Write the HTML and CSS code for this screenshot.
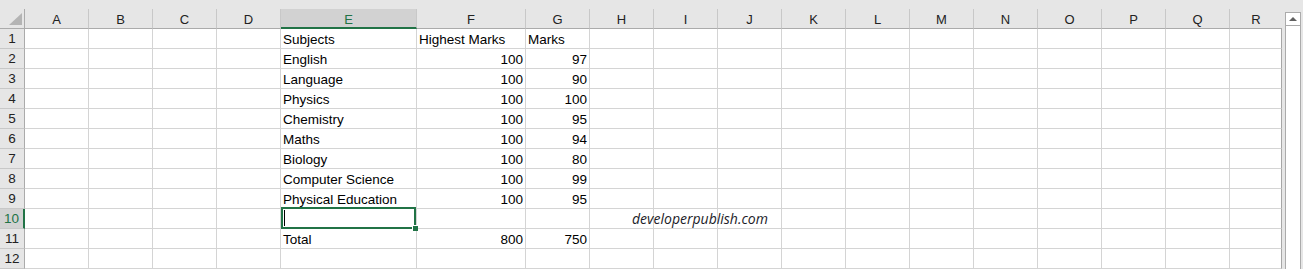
FILE: index.html
```html
<!DOCTYPE html>
<html lang="en">
<head>
    <meta charset="UTF-8">
    <title>Marks - Sheet1</title>
    <link rel="stylesheet" href="styles.css">
</head>
<body>
    <div class="app">
        <div class="sheet">
            <!-- column headers -->
            <div class="hd corner"><svg width="14" height="13" viewBox="0 0 14 13"><polygon points="13,0 13,12 0,12" fill="#b4b4b4"/></svg></div>
            <div class="hd">A</div><div class="hd">B</div><div class="hd">C</div><div class="hd">D</div>
            <div class="hd sel">E</div><div class="hd">F</div><div class="hd">G</div><div class="hd">H</div>
            <div class="hd">I</div><div class="hd">J</div><div class="hd">K</div><div class="hd">L</div>
            <div class="hd">M</div><div class="hd">N</div><div class="hd">O</div><div class="hd">P</div>
            <div class="hd">Q</div><div class="hd">R</div>

            <!-- row 1 -->
            <div class="rh">1</div>
            <div class="c"></div><div class="c"></div><div class="c"></div><div class="c"></div>
            <div class="c">Subjects</div><div class="c">Highest Marks</div><div class="c">Marks</div>
            <div class="c"></div><div class="c"></div><div class="c"></div><div class="c"></div><div class="c"></div><div class="c"></div><div class="c"></div><div class="c"></div><div class="c"></div><div class="c"></div><div class="c"></div>

            <!-- row 2 -->
            <div class="rh">2</div>
            <div class="c"></div><div class="c"></div><div class="c"></div><div class="c"></div>
            <div class="c">English</div><div class="c num">100</div><div class="c num">97</div>
            <div class="c"></div><div class="c"></div><div class="c"></div><div class="c"></div><div class="c"></div><div class="c"></div><div class="c"></div><div class="c"></div><div class="c"></div><div class="c"></div><div class="c"></div>

            <!-- row 3 -->
            <div class="rh">3</div>
            <div class="c"></div><div class="c"></div><div class="c"></div><div class="c"></div>
            <div class="c">Language</div><div class="c num">100</div><div class="c num">90</div>
            <div class="c"></div><div class="c"></div><div class="c"></div><div class="c"></div><div class="c"></div><div class="c"></div><div class="c"></div><div class="c"></div><div class="c"></div><div class="c"></div><div class="c"></div>

            <!-- row 4 -->
            <div class="rh">4</div>
            <div class="c"></div><div class="c"></div><div class="c"></div><div class="c"></div>
            <div class="c">Physics</div><div class="c num">100</div><div class="c num">100</div>
            <div class="c"></div><div class="c"></div><div class="c"></div><div class="c"></div><div class="c"></div><div class="c"></div><div class="c"></div><div class="c"></div><div class="c"></div><div class="c"></div><div class="c"></div>

            <!-- row 5 -->
            <div class="rh">5</div>
            <div class="c"></div><div class="c"></div><div class="c"></div><div class="c"></div>
            <div class="c">Chemistry</div><div class="c num">100</div><div class="c num">95</div>
            <div class="c"></div><div class="c"></div><div class="c"></div><div class="c"></div><div class="c"></div><div class="c"></div><div class="c"></div><div class="c"></div><div class="c"></div><div class="c"></div><div class="c"></div>

            <!-- row 6 -->
            <div class="rh">6</div>
            <div class="c"></div><div class="c"></div><div class="c"></div><div class="c"></div>
            <div class="c">Maths</div><div class="c num">100</div><div class="c num">94</div>
            <div class="c"></div><div class="c"></div><div class="c"></div><div class="c"></div><div class="c"></div><div class="c"></div><div class="c"></div><div class="c"></div><div class="c"></div><div class="c"></div><div class="c"></div>

            <!-- row 7 -->
            <div class="rh">7</div>
            <div class="c"></div><div class="c"></div><div class="c"></div><div class="c"></div>
            <div class="c">Biology</div><div class="c num">100</div><div class="c num">80</div>
            <div class="c"></div><div class="c"></div><div class="c"></div><div class="c"></div><div class="c"></div><div class="c"></div><div class="c"></div><div class="c"></div><div class="c"></div><div class="c"></div><div class="c"></div>

            <!-- row 8 -->
            <div class="rh">8</div>
            <div class="c"></div><div class="c"></div><div class="c"></div><div class="c"></div>
            <div class="c">Computer Science</div><div class="c num">100</div><div class="c num">99</div>
            <div class="c"></div><div class="c"></div><div class="c"></div><div class="c"></div><div class="c"></div><div class="c"></div><div class="c"></div><div class="c"></div><div class="c"></div><div class="c"></div><div class="c"></div>

            <!-- row 9 -->
            <div class="rh">9</div>
            <div class="c"></div><div class="c"></div><div class="c"></div><div class="c"></div>
            <div class="c">Physical Education</div><div class="c num">100</div><div class="c num">95</div>
            <div class="c"></div><div class="c"></div><div class="c"></div><div class="c"></div><div class="c"></div><div class="c"></div><div class="c"></div><div class="c"></div><div class="c"></div><div class="c"></div><div class="c"></div>

            <!-- row 10 (active cell E10) -->
            <div class="rh sel">10</div>
            <div class="c"></div><div class="c"></div><div class="c"></div><div class="c"></div>
            <div class="c active"><span class="caret"></span><span class="handle"></span></div><div class="c"></div><div class="c"></div>
            <div class="c watermark">developerpublish.com</div><div class="c"></div><div class="c"></div><div class="c"></div><div class="c"></div><div class="c"></div><div class="c"></div><div class="c"></div><div class="c"></div><div class="c"></div><div class="c"></div>

            <!-- row 11 -->
            <div class="rh">11</div>
            <div class="c"></div><div class="c"></div><div class="c"></div><div class="c"></div>
            <div class="c">Total</div><div class="c num">800</div><div class="c num">750</div>
            <div class="c"></div><div class="c"></div><div class="c"></div><div class="c"></div><div class="c"></div><div class="c"></div><div class="c"></div><div class="c"></div><div class="c"></div><div class="c"></div><div class="c"></div>

            <!-- row 12 -->
            <div class="rh">12</div>
            <div class="c"></div><div class="c"></div><div class="c"></div><div class="c"></div>
            <div class="c"></div><div class="c"></div><div class="c"></div>
            <div class="c"></div><div class="c"></div><div class="c"></div><div class="c"></div><div class="c"></div><div class="c"></div><div class="c"></div><div class="c"></div><div class="c"></div><div class="c"></div><div class="c"></div>
        </div>

        <div class="vscroll">
            <div class="arrow-up"></div>
            <div class="track"></div>
        </div>
    </div>
</body>
</html>
```

FILE: styles.css
```css
body {
    margin: 0;
    background: #e6e6e6;
    font-family: "Liberation Sans", Arial, sans-serif;
    overflow: hidden;
}
.app {
    display: flex;
    padding-top: 9px;
    height: 260px;
}
.sheet {
    display: grid;
    grid-template-columns: 25px repeat(4, 64px) 136px 109px repeat(11, 64px) 52px;
    grid-auto-rows: 20px;
    background: white;
    flex: none;
}
.sheet > div {
    box-sizing: border-box;
    white-space: nowrap;
}

/* headers */
.hd {
    background: #e6e6e6;
    border-right: 1px solid #c8c8c8;
    border-bottom: 1px solid #ababab;
    color: #222;
    font-size: 13px;
    text-align: center;
    line-height: 19px;
    padding-top: 1px;
}
.hd:nth-child(19) { border-right: none; }
.hd.corner {
    border-right: 1px solid #ababab;
    display: flex;
    justify-content: flex-end;
    align-items: flex-end;
    padding: 0 1px 2px 0;
}
.hd.corner svg { display: block; }
.hd.sel {
    background: #d2d2d2;
    color: #217346;
    border-bottom: 2px solid #217346;
}
.rh {
    background: #e6e6e6;
    border-right: 1px solid #ababab;
    border-bottom: 1px solid #c8c8c8;
    color: #222;
    font-size: 13.5px;
    text-align: center;
    line-height: 20px;
}
.rh.sel {
    background: #d2d2d2;
    color: #217346;
    border-right: 2px solid #217346;
}

/* cells */
.c {
    border-right: 1px solid #d4d4d4;
    border-bottom: 1px solid #d4d4d4;
    font-size: 13.5px;
    color: #000;
    line-height: 15px;
    padding: 0 2px 1px;
    display: flex;
    align-items: flex-end;
    overflow: visible;
}
.c:nth-child(19n) { border-right: 1px solid #a6a6a6; }
.c.num { justify-content: flex-end; }

.c.active { position: relative; }
.c.active::after {
    content: "";
    position: absolute;
    left: 0;
    right: 0;
    top: -2px;
    bottom: -1px;
    border: 2px solid #217346;
}
.caret {
    position: absolute;
    left: 3px;
    top: 1px;
    width: 1px;
    height: 16px;
    background: #000;
}
.handle {
    position: absolute;
    right: -2px;
    bottom: -3px;
    width: 5px;
    height: 5px;
    background: #217346;
    border: 1px solid white;
    border-right: none;
    border-bottom: none;
    z-index: 2;
}
.watermark {
    font-family: "Open Sans", sans-serif;
    font-style: italic;
    font-size: 14px;
    color: #1c1c28;
    padding-left: 42px;
    padding-bottom: 2px;
    position: relative;
    z-index: 1;
}

/* vertical scrollbar */
.vscroll {
    width: 21px;
    box-sizing: border-box;
    padding: 3px 2px 0 3px;
    display: flex;
    flex-direction: column;
}
.arrow-up {
    height: 14px;
    background: white;
    border: 1px solid #ababab;
    box-sizing: border-box;
    display: flex;
    justify-content: center;
    align-items: center;
}
.arrow-up::before {
    content: "";
    border-left: 4px solid transparent;
    border-right: 4px solid transparent;
    border-bottom: 4px solid #606060;
}
.track {
    flex: 1;
    background: white;
    border-left: 1px solid #ababab;
    border-right: 1px solid #ababab;
}
```
